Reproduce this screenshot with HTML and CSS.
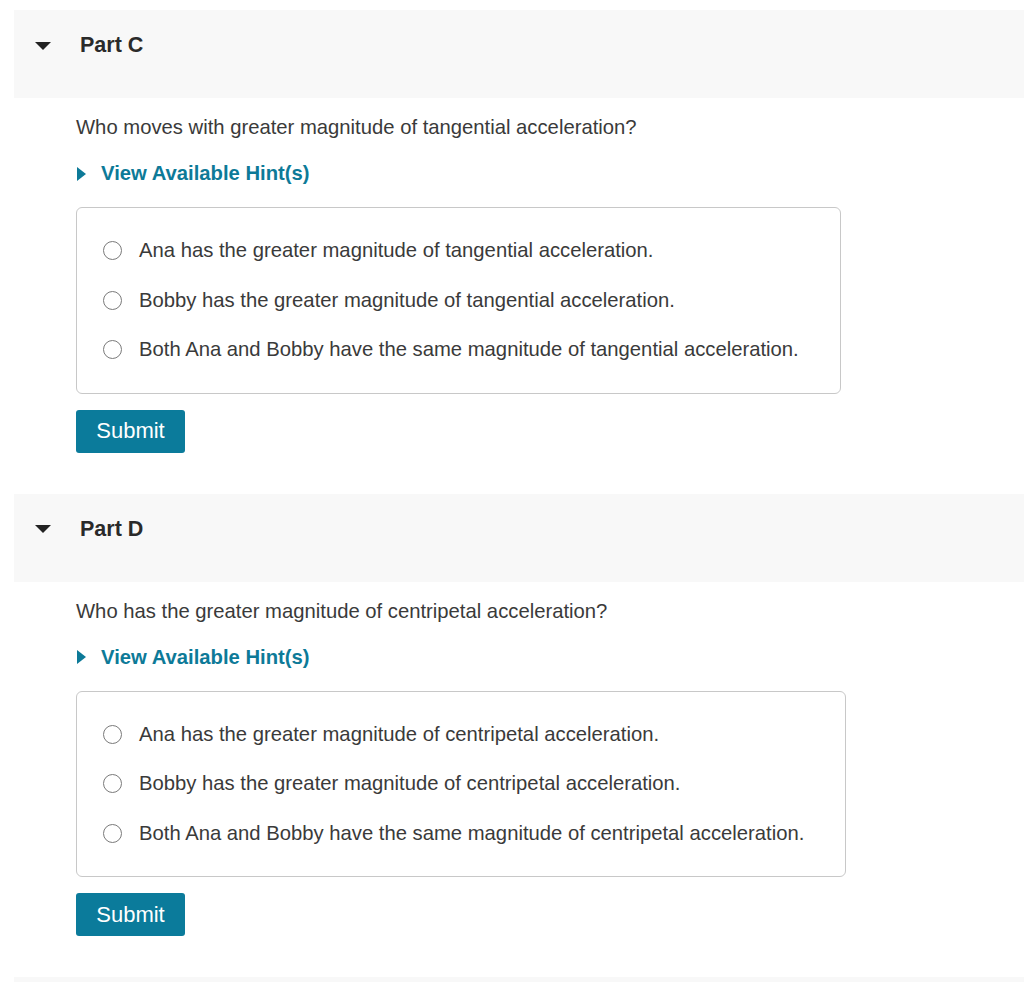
FILE: index.html
```html
<!DOCTYPE html>
<html lang="en">
<head>
    <meta charset="UTF-8">
    <meta name="viewport" content="width=device-width, initial-scale=1.0">
    <title>Parts C and D</title>
    <link rel="stylesheet" href="styles.css">
</head>
<body>
    <div class="part">
        <div class="part-header">
            <div class="header-row">
                <span class="caret-down"></span>
                <h2>Part C</h2>
            </div>
        </div>
        <div class="part-body">
            <p class="question">Who moves with greater magnitude of tangential acceleration?</p>
            <a class="hint" href="#"><span class="caret-right"></span>View Available Hint(s)</a>
            <div class="choices">
                <label class="choice"><input type="radio" name="partC"><span>Ana has the greater magnitude of tangential acceleration.</span></label>
                <label class="choice"><input type="radio" name="partC"><span>Bobby has the greater magnitude of tangential acceleration.</span></label>
                <label class="choice"><input type="radio" name="partC"><span>Both Ana and Bobby have the same magnitude of tangential acceleration.</span></label>
            </div>
            <button class="submit-btn">Submit</button>
        </div>
    </div>

    <div class="part">
        <div class="part-header">
            <div class="header-row">
                <span class="caret-down"></span>
                <h2>Part D</h2>
            </div>
        </div>
        <div class="part-body">
            <p class="question">Who has the greater magnitude of centripetal acceleration?</p>
            <a class="hint" href="#"><span class="caret-right"></span>View Available Hint(s)</a>
            <div class="choices">
                <label class="choice"><input type="radio" name="partD"><span>Ana has the greater magnitude of centripetal acceleration.</span></label>
                <label class="choice"><input type="radio" name="partD"><span>Bobby has the greater magnitude of centripetal acceleration.</span></label>
                <label class="choice"><input type="radio" name="partD"><span>Both Ana and Bobby have the same magnitude of centripetal acceleration.</span></label>
            </div>
            <button class="submit-btn">Submit</button>
        </div>
    </div>

    <div class="part">
        <div class="part-header"></div>
    </div>
</body>
</html>
```

FILE: styles.css
```css
* {
    box-sizing: border-box;
    margin: 0;
    padding: 0;
}

body {
    font-family: "Liberation Sans", Arial, sans-serif;
    color: #333;
    background: #fff;
    padding-top: 10px;
    overflow: hidden;
    height: 982px;
}

.part {
    margin-left: 14px;
}

.part-header {
    height: 88px;
    padding: 23px 0 0 21px;
    background: #f8f8f8;
}

.header-row {
    display: flex;
    align-items: center;
    height: 25px;
}

.caret-down {
    width: 0;
    height: 0;
    border-left: 8px solid transparent;
    border-right: 8px solid transparent;
    border-top: 8px solid #222;
    margin-right: 29px;
}

h2 {
    font-size: 21.5px;
    font-weight: bold;
    color: #2a2a2a;
}

.part-body {
    padding: 18px 0 41px 62px;
}

.question {
    font-size: 20.25px;
    line-height: 23px;
    color: #3a3a3a;
}

.hint {
    display: flex;
    align-items: center;
    margin-top: 23px;
    font-size: 20.25px;
    line-height: 23px;
    font-weight: bold;
    color: #0d7a98;
    text-decoration: none;
}

.caret-right {
    width: 0;
    height: 0;
    border-top: 7px solid transparent;
    border-bottom: 7px solid transparent;
    border-left: 9px solid #0d7a98;
    margin: 0 15px 0 1px;
}

.choices {
    width: fit-content;
    margin-top: 22px;
    padding: 18px 41px 18px 26px;
    border: 1px solid #c8c8c8;
    border-radius: 6px;
}

.choice {
    display: flex;
    align-items: center;
    height: 49.5px;
    font-size: 20.25px;
    color: #3a3a3a;
    cursor: pointer;
}

.choice input {
    appearance: none;
    width: 19px;
    height: 19px;
    border: 1.5px solid #7a7a7a;
    border-radius: 50%;
    margin-right: 17px;
    background: #fff;
}

.submit-btn {
    display: block;
    margin-top: 16px;
    width: 109px;
    height: 43px;
    border: none;
    border-radius: 3px;
    background: #0b7b9b;
    color: #fff;
    font-family: "Liberation Sans", Arial, sans-serif;
    font-size: 22px;
    cursor: pointer;
}
```
